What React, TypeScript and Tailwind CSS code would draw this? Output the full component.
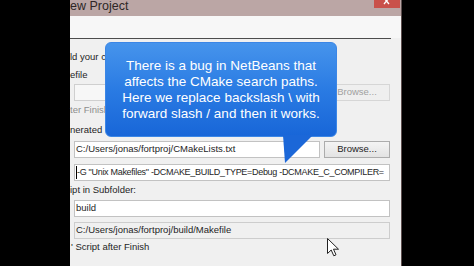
export default function App() {
  return (
    <div className="relative flex h-[266px] w-[474px] overflow-hidden bg-black font-['Liberation_Sans',Arial,sans-serif]">
      <div className="w-[70px] shrink-0" />

      {/* dialog, cropped on the left by the video frame */}
      <div className="flex w-[332px] shrink-0 flex-col border-r border-[#5e4f4f] bg-[#f0f0f0]">
        <div className="flex h-[16px] items-start bg-[#bba6a5]">
          <span className="whitespace-nowrap text-[12.5px] leading-[12px] text-[#2e2626]">ew Project</span>
          <div className="ml-auto mr-[1px] flex h-[8px] w-[26px] justify-center bg-[#c9514a]">
            <svg width="8" height="6" viewBox="0 0 8 6">
              <path d="M1 -2 L6 4 M6 -2 L1 4" stroke="#fff" strokeWidth="1.3" />
            </svg>
          </div>
        </div>
        <div className="h-[22px] bg-[#f7f7f7]" />
        <div className="mr-[10px] h-px bg-[#4d4d4d]" />

        <div className="flex flex-1 flex-col pt-[12px] text-[9.5px] text-[#1e1e1e]">
          <div className="h-[12px] whitespace-nowrap leading-[12px]">ld your c</div>
          <div className="mt-[6px] h-[12px] whitespace-nowrap leading-[12px]">efile</div>
          <div className="mt-[3px] flex h-[17px] pl-[4px] pr-[11px]">
            <div className="flex-1 border border-[#cfcfcf] bg-[#f7f7f7]" />
            <div className="ml-[4px] flex w-[66px] items-center justify-center border border-[#d6d6d6] bg-[#efefef] text-[#a0a0a0]">
              Browse...
            </div>
          </div>
          <div className="mt-[3px] h-[12px] whitespace-nowrap leading-[12px] text-[#8d8d8d]">ter Finish</div>
          <div className="mt-[8px] h-[12px] whitespace-nowrap leading-[12px]">nerated</div>
          <div className="mt-[5px] flex h-[17px] pl-[4px] pr-[11px]">
            <div className="flex flex-1 items-center border border-[#c2c2c2] bg-white px-[1px] whitespace-nowrap">
              C:/Users/jonas/fortproj/CMakeLists.txt
            </div>
            <div className="ml-[4px] flex w-[66px] items-center justify-center border border-[#acacac] bg-linear-to-b from-[#f4f4f4] to-[#e3e3e3]">
              Browse...
            </div>
          </div>
          <div className="mt-[6px] flex h-[17px] pl-[4px] pr-[11px]">
            <div className="flex flex-1 items-center overflow-hidden border border-[#c2c2c2] bg-white px-[1px] whitespace-nowrap text-[9px] tracking-[-0.3px]">
              <span className="border-l border-black">-G "Unix Makefiles" -DCMAKE_BUILD_TYPE=Debug -DCMAKE_C_COMPILER=</span>
            </div>
          </div>
          <div className="mt-[3px] h-[12px] whitespace-nowrap leading-[12px]">ipt in Subfolder:</div>
          <div className="mt-[4px] flex h-[17px] pl-[4px] pr-[11px]">
            <div className="flex flex-1 items-center border border-[#c2c2c2] bg-white px-[1px]">build</div>
          </div>
          <div className="mt-[5px] flex h-[17px] pl-[4px] pr-[11px]">
            <div className="flex flex-1 items-center border border-[#cdcdcd] bg-[#f0f0f0] px-[1px] whitespace-nowrap">
              C:/Users/jonas/fortproj/build/Makefile
            </div>
          </div>
          <div className="mt-[2px] h-[12px] whitespace-nowrap pl-[1px] leading-[12px]">' Script after Finish</div>
        </div>
      </div>

      <div className="flex-1" />

      {/* callout overlay */}
      <div className="absolute left-[105px] top-[42px] flex h-[95px] w-[232px] flex-col items-center justify-center rounded-[6px] border border-[#3b86e6] bg-linear-to-b from-[#4694ec] via-[#2a7be3] to-[#1866d8] text-[13.5px] leading-[16px] text-white">
        <div className="whitespace-nowrap">There is a bug in NetBeans that</div>
        <div className="whitespace-nowrap">affects the CMake search paths.</div>
        <div className="whitespace-nowrap">Here we replace backslash \ with</div>
        <div className="whitespace-nowrap">forward slash / and then it works.</div>
      </div>
      <svg className="absolute left-[282px] top-[135px]" width="33" height="29" viewBox="0 0 33 29">
        <path d="M1 0 L31 0 L3 28 Z" fill="#1b67d8" />
      </svg>

      {/* mouse pointer */}
      <svg className="absolute left-[327px] top-[238px]" width="13" height="20" viewBox="0 0 13 20">
        <path d="M0.5 0.5 V15.5 L4.2 12 L6.8 17.8 L9 16.8 L6.5 11.2 H11.5 Z" fill="#fff" stroke="#222" strokeWidth="1" />
      </svg>
    </div>
  );
}
